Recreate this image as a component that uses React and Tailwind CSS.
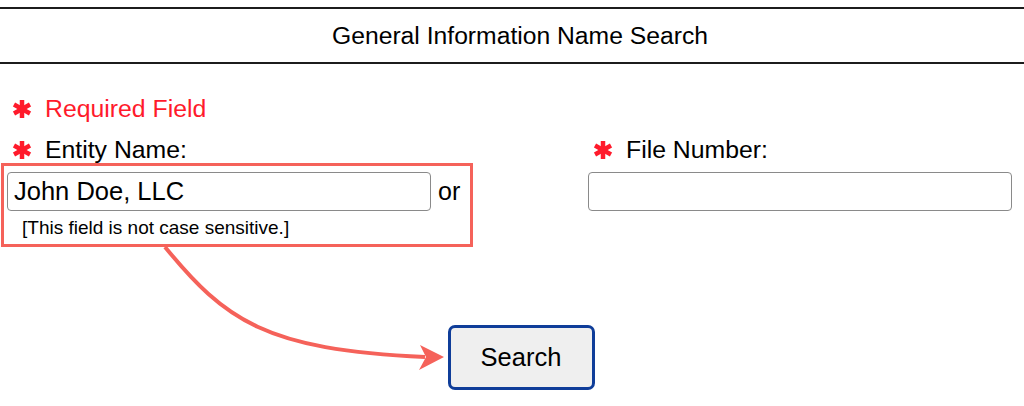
import React from "react";

const Star = () => (
  <svg width="20" height="18" viewBox="0 0 20 18" className="shrink-0">
    <g stroke="#ff1a2b" strokeWidth="4.5" strokeLinecap="butt">
      <line x1="10" y1="0" x2="10" y2="18" />
      <line x1="2" y1="4.5" x2="18" y2="13.5" />
      <line x1="2" y1="13.5" x2="18" y2="4.5" />
    </g>
  </svg>
);

const App = () => {
  return (
    <div className="relative w-[1024px] h-[406px] bg-white text-black font-['Liberation_Sans',Arial,sans-serif] overflow-hidden">
      <div className="pt-[7px]">
        <div className="h-[57px] border-y-2 border-[#1c1c1c] flex items-center justify-center pl-[16px] text-[24.7px]">
          General Information Name Search
        </div>
      </div>

      <div className="flex items-center gap-[13px] pl-[12px] mt-[32px] h-[26px] text-[24.8px] text-[#ff1a2b]">
        <Star />
        <span>Required Field</span>
      </div>

      <div className="flex mt-[15px]">
        <div className="w-[588px] pl-[1px]">
          <div className="flex items-center gap-[13px] pl-[11px] h-[26px] text-[24.8px]">
            <Star />
            <span>Entity Name:</span>
          </div>
          <div className="w-[472px] h-[84px] border-[3px] border-[#f5625a] pl-[3px] pt-[6px]">
            <div className="flex items-center gap-[7px]">
              <div className="w-[424px] h-[39px] border border-[#8a8a8a] rounded-[4px] flex items-center pl-[6px] text-[25.5px]">
                John Doe, LLC
              </div>
              <span className="text-[25px]">or</span>
            </div>
            <div className="pl-[15px] mt-[6px] text-[19px] leading-[21px]">[This field is not case sensitive.]</div>
          </div>
        </div>
        <div className="w-[424px]">
          <div className="flex items-center gap-[13px] pl-[5px] h-[26px] text-[24.8px]">
            <Star />
            <span>File Number:</span>
          </div>
          <div className="mt-[9px] w-[424px] h-[39px] border border-[#8a8a8a] rounded-[4px]"></div>
        </div>
      </div>

      <div className="flex justify-center pl-[18px] mt-[78px]">
        <button className="w-[147px] h-[65px] rounded-[7px] border-[3px] border-[#0f3d99] bg-[#efefef] text-[25.5px] font-['Liberation_Sans',Arial,sans-serif]">
          Search
        </button>
      </div>

      <svg className="absolute left-0 top-0 pointer-events-none" width="1024" height="406">
        <path d="M165 247 C 225 320, 265 350, 425 357" fill="none" stroke="#f5625a" strokeWidth="4" />
        <polygon points="444,357 420,345 426,357 419,370" fill="#f5625a" />
      </svg>
    </div>
  );
};

export default App;
